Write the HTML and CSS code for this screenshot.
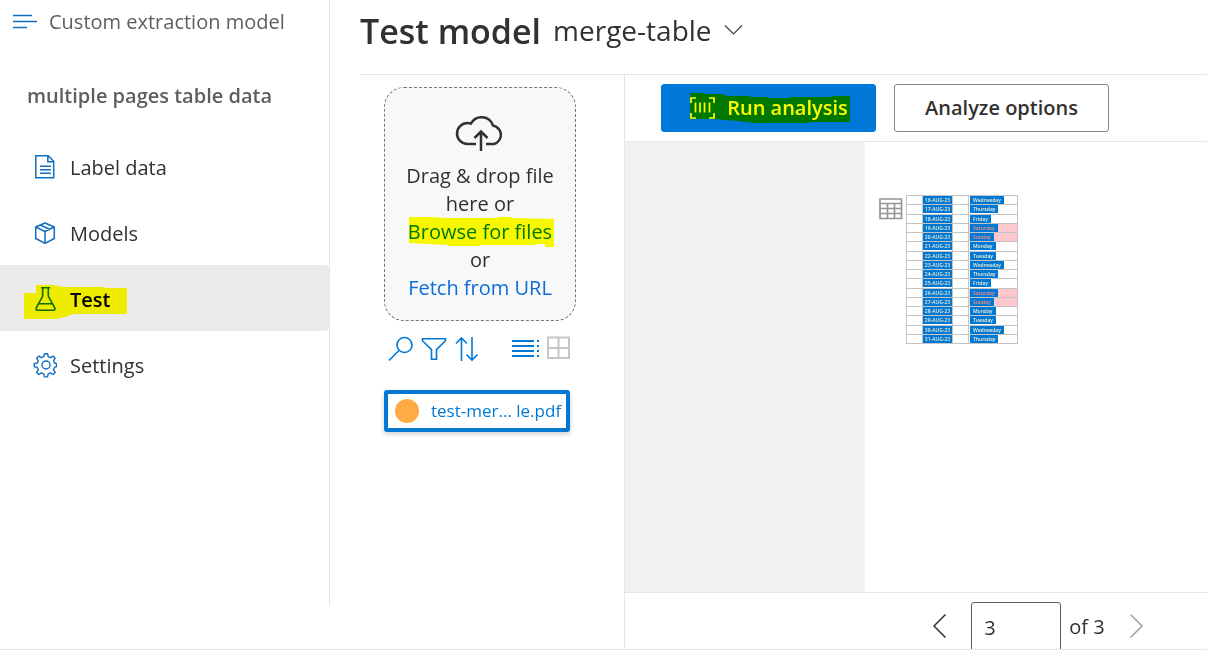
FILE: index.html
```html
<!DOCTYPE html>
<html lang="en">
<head>
    <meta charset="UTF-8">
    <meta name="viewport" content="width=device-width, initial-scale=1.0">
    <title>Test model</title>
    <link rel="stylesheet" href="styles.css">
</head>
<body>
    <div class="app">
        <nav class="sidebar">
            <div class="sidebar-top">
                <button type="button" class="icon-btn" aria-label="Toggle menu">
                    <svg width="25" height="16" viewBox="0 0 25 16" stroke="#106ebe" stroke-width="1.6"><path d="M1 1.500h19M1 7.500h24M1 13.500h14"/></svg>
                </button>
                <span>Custom extraction model</span>
            </div>
            <h2 class="project-name">multiple pages table data</h2>
            <ul class="menu">
                <li><a href="#label">
                    <svg width="24" height="26" viewBox="0 0 24 26" fill="none" stroke="#106ebe" stroke-width="1.500"><path d="M2.800 .8h12.400l5.500 5.500v16.500h-17.900zM14.800 .8v6h6M7 11.200h11M7 14.700h11M7 18.200h11"/></svg>
                    Label data
                </a></li>
                <li><a href="#models">
                    <svg width="24" height="26" viewBox="0 0 24 26" fill="none" stroke="#106ebe" stroke-width="1.500" stroke-linejoin="round"><path d="M12 2l9.300 4v11.500L12 22.300l-9.300-4.800V6zM2.700 6L12 10.500 21.300 6M12 10.500v11.800M7.300 4l9.300 4.300"/></svg>
                    Models
                </a></li>
                <li><a href="#test" class="active">
                    <svg width="24" height="26" viewBox="0 0 24 26" fill="none" stroke="#106ebe" stroke-width="1.600" stroke-linejoin="round"><path d="M8 .8h9M9.700 .8v8.300L3.200 21q-.8 2.200 1.400 2.200h15.800q2.200 0 1.400-2.200L15.300 9.100V.8M6 16.700h13"/></svg>
                    Test
                    <svg class="marker marker-test" width="104" height="36" viewBox="0 0 104 36"><path fill="#ff0" d="M0 9h12V1h17l10 2h7V3h35v1h22v26H49l-8 3-9 2H0z"/></svg>
                </a></li>
                <li><a href="#settings">
                    <svg width="24" height="26" viewBox="0 0 24 26" fill="none" stroke="#106ebe" stroke-width="1.400" stroke-linejoin="round"><path d="M11.500 .7h3l.7 3 2.200 1 2.600-1.600 2.100 2.100-1.600 2.600 1 2.200 2 .7v3l-2 .7-1 2.400 1.600 2.600-2.100 2.100-2.600-1.600-2.200 1-.7 3h-3l-.7-3-2.400-1-2.600 1.600-2.100-2.100 1.600-2.600-1-2.400-3-.7v-3l3-.7 1-2.200-1.600-2.600 2.100-2.100 2.600 1.600 2.400-1z"/><circle cx="13" cy="12" r="4"/></svg>
                    Settings
                </a></li>
            </ul>
        </nav>

        <main class="main">
            <header class="header">
                <h1>Test model</h1>
                <button type="button" class="model-select">
                    merge-table
                    <svg width="19" height="12" viewBox="0 0 19 12" fill="none" stroke="#444" stroke-width="1.200"><path d="M1 1.500l8.500 8.500L18 1.500"/></svg>
                </button>
            </header>

            <div class="content">
                <section class="files">
                    <div class="dropzone">
                        <svg width="50" height="38" viewBox="0 0 50 38" fill="none" stroke="#323130" stroke-width="2.500"><path d="M21 30H12.500A10.500 10.500 0 0 1 12.500 9q2 0 3.500.5A12 12 0 0 1 38 11.500A9.500 9.500 0 0 1 39 30H31M26 37V17.500M19.500 24l6.500-6.500L32.500 24"/></svg>
                        <span>Drag &amp; drop file</span>
                        <span>here or</span>
                        <a href="#browse" class="browse">Browse for files
                            <svg class="marker marker-browse" width="146" height="30" viewBox="0 0 146 30"><path fill="#ff0" d="M0 0h23l14 1h52V0h14v1l42 1v28h-9v-3h-9v1H71v1H39v-1L0 26z"/></svg>
                        </a>
                        <span>or</span>
                        <a href="#fetch">Fetch from URL</a>
                    </div>

                    <div class="tools">
                        <button type="button" class="icon-btn" aria-label="Search">
                            <svg width="26" height="26" viewBox="0 0 26 26" fill="none" stroke="#0078d4" stroke-width="1.600"><circle cx="16.500" cy="9" r="7.500"/><path d="M11 14.500L1 24.500"/></svg>
                        </button>
                        <button type="button" class="icon-btn" aria-label="Filter">
                            <svg width="26" height="26" viewBox="0 0 26 26" fill="none" stroke="#0078d4" stroke-width="1.600"><path d="M1.500 2.700h23v2l-9 9v9.500h-5v-9.500l-9-9z"/></svg>
                        </button>
                        <button type="button" class="icon-btn" aria-label="Sort">
                            <svg width="26" height="26" viewBox="0 0 26 26" fill="none" stroke="#0078d4" stroke-width="1.600"><path d="M7.500 25V2M2 7.500L7.500 2 13 7.500M18 1v23M12.500 18.500L18 24l5.500-5.500"/></svg>
                        </button>
                        <button type="button" class="icon-btn list-view" aria-label="List view">
                            <svg width="28" height="26" viewBox="0 0 28 26" stroke="#0078d4" stroke-width="2"><path d="M1 5h22M1 10h22M1 15h22M1 20h22M26 5h2M26 10h2M26 15h2M26 20h2"/></svg>
                        </button>
                        <button type="button" class="icon-btn" aria-label="Grid view">
                            <svg width="24" height="26" viewBox="0 0 24 26" fill="none" stroke="#c8c6c4" stroke-width="2"><path d="M2 1.500h21V22H2zM12.500 1.500V22M2 12h21"/></svg>
                        </button>
                    </div>

                    <button type="button" class="file-card">
                        <span class="dot"></span>
                        <span>test-mer... le.pdf</span>
                    </button>
                </section>

                <section class="viewer">
                    <div class="toolbar">
                        <button type="button" class="btn btn-primary">
                            <svg width="26" height="24" viewBox="0 0 26 24" fill="none" stroke="#fff" stroke-width="1.700"><path d="M2 7V2h5M20 2h5v5M25 17v5h-5M7 22H2v-5M6.500 6.500v10M11 6.500v10M15.500 6.500v10M20.500 6.500v10"/></svg>
                            Run analysis
                            <svg class="marker marker-run" width="160" height="30" viewBox="0 0 160 30"><path fill="#ff0" d="M0 0h15v1h17l5 2h23v1h18v1h22V4h41V3h19v26h-41v1H64l-16-2-12-1-14-1H0z"/></svg>
                        </button>
                        <button type="button" class="btn">Analyze options</button>
                    </div>

                    <div class="canvas">
                        <div class="page">
                            <svg class="table-icon" width="24" height="22" viewBox="0 0 24 22" fill="none" stroke="#979593" stroke-width="1.700"><path d="M1 1h21.500v19.500H1zM1 5.500h21.500M1 10.500h21.500M1 15.500h21.500M8.500 5.500v15M15.500 5.500v15"/></svg>
                            <table class="result">
                                <tbody>
                                    <tr><td></td><td><span>16-AUG-23</span></td><td></td><td><span>Wednesday</span></td></tr>
                                    <tr><td></td><td><span>17-AUG-23</span></td><td></td><td><span>Thursday</span></td></tr>
                                    <tr><td></td><td><span>18-AUG-23</span></td><td></td><td><span>Friday</span></td></tr>
                                    <tr class="weekend"><td></td><td><span>19-AUG-23</span></td><td></td><td><span>Saturday</span></td></tr>
                                    <tr class="weekend"><td></td><td><span>20-AUG-23</span></td><td></td><td><span>Sunday</span></td></tr>
                                    <tr><td></td><td><span>21-AUG-23</span></td><td></td><td><span>Monday</span></td></tr>
                                    <tr><td></td><td><span>22-AUG-23</span></td><td></td><td><span>Tuesday</span></td></tr>
                                    <tr><td></td><td><span>23-AUG-23</span></td><td></td><td><span>Wednesday</span></td></tr>
                                    <tr><td></td><td><span>24-AUG-23</span></td><td></td><td><span>Thursday</span></td></tr>
                                    <tr><td></td><td><span>25-AUG-23</span></td><td></td><td><span>Friday</span></td></tr>
                                    <tr class="weekend"><td></td><td><span>26-AUG-23</span></td><td></td><td><span>Saturday</span></td></tr>
                                    <tr class="weekend"><td></td><td><span>27-AUG-23</span></td><td></td><td><span>Sunday</span></td></tr>
                                    <tr><td></td><td><span>28-AUG-23</span></td><td></td><td><span>Monday</span></td></tr>
                                    <tr><td></td><td><span>29-AUG-23</span></td><td></td><td><span>Tuesday</span></td></tr>
                                    <tr><td></td><td><span>30-AUG-23</span></td><td></td><td><span>Wednesday</span></td></tr>
                                    <tr><td></td><td><span>31-AUG-23</span></td><td></td><td><span>Thursday</span></td></tr>
                                </tbody>
                            </table>
                        </div>
                    </div>

                    <div class="pager">
                        <button type="button" class="icon-btn" aria-label="Previous page">
                            <svg width="14" height="26" viewBox="0 0 14 26" fill="none" stroke="#323130" stroke-width="1.500"><path d="M13.500 1.500L2 13l11.500 11.500"/></svg>
                        </button>
                        <input type="text" id="page" value="3" aria-label="Page">
                        <label for="page">of 3</label>
                        <button type="button" class="icon-btn" aria-label="Next page">
                            <svg width="14" height="26" viewBox="0 0 14 26" fill="none" stroke="#a19f9d" stroke-width="1.500"><path d="M.5 1.500L12 13 .5 24.500"/></svg>
                        </button>
                    </div>
                </section>
            </div>
        </main>
    </div>
</body>
</html>
```

FILE: styles.css
```css
* {
    box-sizing: border-box;
}
body {
    font-family: "Segoe UI", "Open Sans", "Noto Sans", sans-serif;
    font-size: 20px;
    line-height: 28px;
    margin: 0;
    color: #323130;
    background-color: #fff;
}
h1, h2, ul {
    margin: 0;
    padding: 0;
}
a {
    color: #0f6cd4;
    text-decoration: none;
}
button, input {
    font: inherit;
    color: inherit;
}
button {
    cursor: pointer;
    white-space: nowrap;
}
svg {
    display: block;
    flex: none;
}
.icon-btn {
    padding: 0;
    border: none;
    background: none;
}
/* yellow highlighter strokes */
.marker {
    position: absolute;
    mix-blend-mode: multiply;
    pointer-events: none;
}
.app {
    display: flex;
    height: calc(100vh - 8px);
    overflow: hidden;
    border-bottom: 1px solid #e6e6e6;
}

/* sidebar */
.sidebar {
    flex: none;
    width: 330px;
    margin-bottom: 43px;
    border-right: 1px solid #e6e6e6;
}
.sidebar-top {
    display: flex;
    align-items: center;
    gap: 12px;
    padding: 8px 12px;
    color: #605e5c;
}
.project-name {
    padding: 38px 27px;
    font-size: 20px;
    font-weight: 600;
    color: #605e5c;
}
.menu {
    list-style: none;
    margin-top: -15px;
}
.menu a {
    position: relative;
    display: flex;
    align-items: center;
    gap: 13px;
    height: 66px;
    padding: 3px 0 0 33px;
    color: #323130;
}
.menu a.active {
    background-color: #ecebe9;
    border-radius: 0 4px 4px 0;
    color: #000;
    font-weight: 600;
}
.marker-test {
    left: 24px;
    top: 19px;
}

/* header */
.main {
    flex: 1;
    display: flex;
    flex-direction: column;
    min-width: 0;
    padding-left: 30px;
}
.header {
    display: flex;
    align-items: center;
    gap: 12px;
    height: 75px;
    padding-bottom: 12px;
    border-bottom: 1px solid #e6e6e6;
}
.header h1 {
    font-size: 34px;
    font-weight: 600;
    line-height: 48px;
}
.model-select {
    display: flex;
    align-items: center;
    gap: 12px;
    padding: 0 0 2px;
    border: none;
    background: none;
    font-size: 28px;
}
.content {
    flex: 1;
    display: flex;
    min-height: 0;
}

/* file list */
.files {
    flex: none;
    width: 264px;
    padding: 12px 24px;
}
.dropzone {
    display: flex;
    flex-direction: column;
    align-items: center;
    width: 192px;
    height: 234px;
    padding-top: 26px;
    border: 1px dashed #797775;
    border-radius: 20px;
    background-color: #f7f8fa;
}
.dropzone svg:first-child {
    margin-bottom: 10px;
}
.dropzone .browse {
    position: relative;
    color: #0078d4;
}
.dropzone .marker-browse {
    left: 1px;
    top: -1px;
    margin: 0;
}
.tools {
    display: flex;
    gap: 7px;
    width: 186px;
    margin-top: 15px;
    padding-left: 4px;
}
.tools .list-view {
    margin-left: auto;
}
.file-card {
    display: flex;
    align-items: center;
    gap: 12px;
    width: 186px;
    height: 42px;
    margin-top: 28px;
    padding: 0 7px;
    border: 4px solid #0078d4;
    border-radius: 3px;
    background-color: #fff;
    box-shadow: 0 2px 5px rgba(0, 0, 0, 0.2);
    color: #0078d4;
    font-size: 17px;
}
.dot {
    flex: none;
    width: 24px;
    height: 24px;
    border-radius: 50%;
    background-color: #ffaa44;
}

/* viewer */
.viewer {
    flex: 1;
    display: flex;
    flex-direction: column;
    min-width: 0;
    border-left: 1px solid #e6e6e6;
}
.toolbar {
    display: flex;
    gap: 18px;
    padding: 9px 36px;
    border-bottom: 1px solid #e6e6e6;
}
.btn {
    position: relative;
    display: flex;
    align-items: center;
    justify-content: center;
    gap: 12px;
    width: 215px;
    height: 48px;
    border: 1px solid #8a8886;
    border-radius: 3px;
    background-color: #fff;
    font-weight: 600;
}
.btn-primary {
    border-color: #0078d7;
    background-color: #0078d7;
    color: #fff;
}
.marker-run {
    left: 28px;
    top: 8px;
}
.canvas {
    flex: 1;
    min-height: 0;
    padding-left: 240px;
    background-color: #f3f2f1;
}
.page {
    display: flex;
    align-items: flex-start;
    gap: 3px;
    height: 100%;
    padding: 53px 14px;
    background-color: #fff;
}
.table-icon {
    margin-top: 3px;
}
.result {
    table-layout: fixed;
    width: 112px;
    height: 149px;
    border-collapse: collapse;
    font-size: 5px;
    font-weight: 600;
    line-height: 6px;
}
.result td {
    padding: 0;
    border: 1px solid #c4c4c4;
    white-space: nowrap;
}
.result td:nth-child(odd) {
    width: 16px;
}
.result td:nth-child(2) {
    width: 30px;
}
.result td:nth-child(4) {
    width: 49px;
}
.result span {
    display: block;
    width: fit-content;
    margin-left: 1px;
    padding: 1px 3px;
    background-color: #0078d4;
    color: #f3eed2;
}
.result td:nth-child(2) span {
    width: 100%;
    margin: 0;
    padding: 1px 0;
    text-align: center;
}
.weekend td:nth-child(4) {
    background-color: #ffc7ce;
}
.weekend td:nth-child(4) span {
    color: #ff8a80;
}

/* pager */
.pager {
    display: flex;
    flex: none;
    align-items: center;
    justify-content: center;
    height: 57px;
    padding: 9px 0 0 244px;
    border-top: 1px solid #e6e6e6;
}
.pager input {
    width: 90px;
    height: 50px;
    margin: 2px 8px 0 25px;
    padding: 2px 12px 0;
    border: 1px solid #605e5c;
    border-radius: 3px;
}
.pager label {
    margin-right: 25px;
    padding-top: 3px;
}
```
